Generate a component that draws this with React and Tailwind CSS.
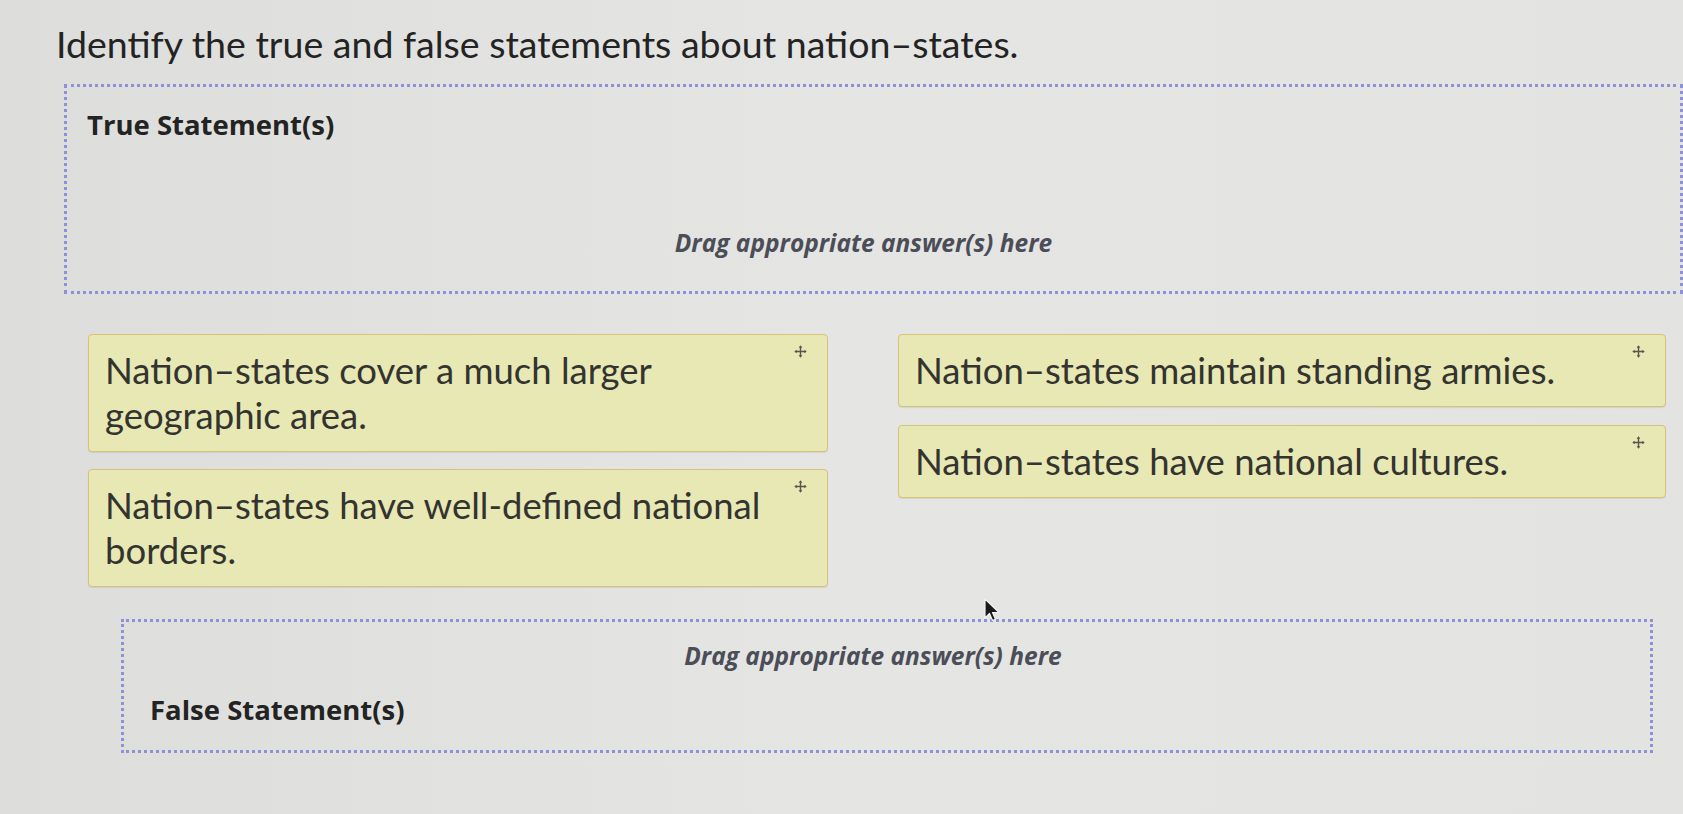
function MoveIcon() {
  return (
    <svg width="13" height="13" viewBox="0 0 14 14" className="text-[#55554d]">
      <path d="M7 1.5v11M1.5 7h11" stroke="currentColor" strokeWidth="1.5" />
      <path d="M7 0.3 5 2.9h4zM7 13.7 5 11.1h4zM0.3 7 2.9 5v4zM13.7 7 11.1 5v4z" fill="currentColor" />
    </svg>
  );
}

function AnswerCard({ children }) {
  return (
    <div className="relative rounded-[4px] border border-[#d7c27c] bg-[#e7e8b3] py-[13px] pl-[16px] pr-[40px] text-[36.5px] leading-[45px] text-[#333330] shadow-[0_1px_1px_rgba(0,0,0,0.08)]">
      {children}
      <span className="absolute right-[20px] top-[10px]">
        <MoveIcon />
      </span>
    </div>
  );
}

export default function App() {
  return (
    <div className="relative min-h-screen bg-gradient-to-r from-[#dddedc] via-[#e5e6e4] to-[#e3e4e2] pl-[56px] pt-[22px] font-['Lato',sans-serif] text-[#232323]">
      <h1 className="text-[37.5px] leading-[44px]">
        Identify the true and false statements about nation–states.
      </h1>

      <div className="ml-[8px] mt-[18px] h-[210px] border-[3px] border-dotted border-[#8e91d8] pl-[20px] pr-[40px] pt-[22px]">
        <div className="font-['Open_Sans',sans-serif] text-[27.5px] font-bold leading-[32px]">True Statement(s)</div>
        <div className="mt-[86px] text-center font-['Open_Sans',sans-serif] text-[24.5px] font-bold italic leading-[32px] text-[#4b4d57]">
          Drag appropriate answer(s) here
        </div>
      </div>

      <div className="ml-[32px] mt-[40px] flex gap-[70px]">
        <div className="flex w-[740px] flex-col gap-[17px]">
          <AnswerCard>Nation–states cover a much larger geographic area.</AnswerCard>
          <AnswerCard>Nation–states have well-defined national borders.</AnswerCard>
        </div>
        <div className="flex w-[768px] flex-col gap-[18px]">
          <AnswerCard>Nation–states maintain standing armies.</AnswerCard>
          <AnswerCard>Nation–states have national cultures.</AnswerCard>
        </div>
      </div>

      <div className="ml-[65px] mr-[30px] mt-[32px] h-[134px] border-[3px] border-dotted border-[#8e91d8] pl-[26px] pr-[54px] pt-[18px]">
        <div className="text-center font-['Open_Sans',sans-serif] text-[24.5px] font-bold italic leading-[32px] text-[#4b4d57]">
          Drag appropriate answer(s) here
        </div>
        <div className="mt-[22px] font-['Open_Sans',sans-serif] text-[27.5px] font-bold leading-[32px]">False Statement(s)</div>
      </div>

      {/* mouse pointer */}
      <svg className="absolute left-[984px] top-[598px]" width="16" height="24" viewBox="0 0 16 24">
        <path d="M1 1v19l4.5-4.5 3 7 3-1.3-3-6.7H15z" fill="#1a1a1a" stroke="#f2f2f2" strokeWidth="1.2" strokeLinejoin="round" />
      </svg>
    </div>
  );
}
